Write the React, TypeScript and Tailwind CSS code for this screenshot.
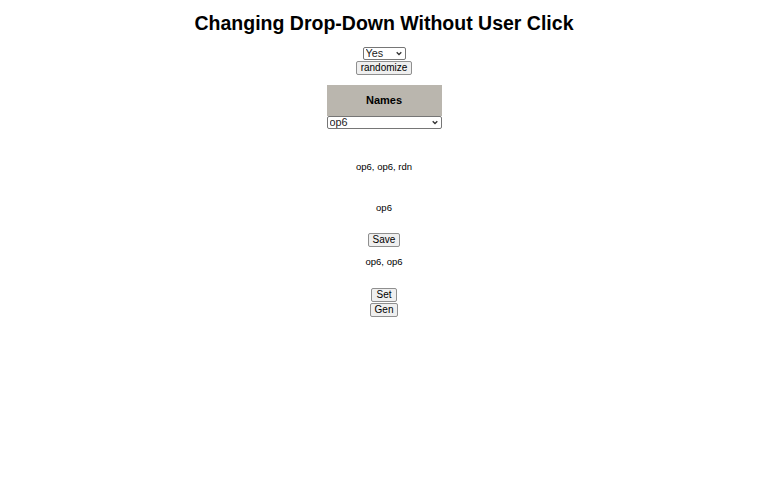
import React, { useState } from "react";

const btn =
  "border border-[#8f8f8f] bg-[#efefef] rounded-[2px] px-[4px] h-[14px] leading-[12px] text-[10px] text-black";

function Dropdown({
  value,
  options,
  width,
  onChange,
}: {
  value: string;
  options: string[];
  width: string;
  onChange: (v: string) => void;
}) {
  return (
    <div className={`flex items-center ${width}`}>
      <select
        value={value}
        onChange={(e) => onChange(e.target.value)}
        className="appearance-none w-full h-[13px] text-[10.8px] leading-[11px] border border-[#767676] bg-white rounded-[2px] pl-[2px] pr-[10px] text-[#222]"
      >
        {options.map((o) => (
          <option key={o}>{o}</option>
        ))}
      </select>
      <svg
        className="pointer-events-none shrink-0 -ml-[10px] mr-[4px]"
        width="6"
        height="5"
        viewBox="0 0 6 5"
        fill="none"
      >
        <path d="M0.7 1.2 L3 3.5 L5.3 1.2" stroke="#333" strokeWidth="1.3" />
      </svg>
    </div>
  );
}

export default function App() {
  const [flag, setFlag] = useState("Yes");
  const [name, setName] = useState("op6");

  return (
    <div className="min-h-[480px] bg-white text-black font-['Liberation_Sans',Arial,sans-serif] flex flex-col items-center">
      <h1 className="text-[19.5px] leading-[24px] font-bold pt-[11px]">
        Changing Drop-Down Without User Click
      </h1>

      <div className="mt-[12px]">
        <Dropdown value={flag} options={["Yes", "No"]} width="w-[43px]" onChange={setFlag} />
      </div>
      <button className={`${btn} mt-[1px]`}>randomize</button>

      {/* names table */}
      <div className="mt-[10px] w-[115px] flex flex-col">
        <div className="h-[31px] bg-[#bab6ae] flex items-center justify-center text-[11px] font-bold">
          Names
        </div>
        <Dropdown value={name} options={["op6", "rdn"]} width="w-[115px]" onChange={setName} />
      </div>

      <p className="mt-[32px] text-[9.5px] leading-[12px]">op6, op6, rdn</p>
      <p className="mt-[29px] text-[9.5px] leading-[12px]">op6</p>

      <button className={`${btn} mt-[19px]`}>Save</button>
      <p className="mt-[9px] text-[9.5px] leading-[12px]">op6, op6</p>

      <button className={`${btn} mt-[20px]`}>Set</button>
      <button className={`${btn} mt-[1px]`}>Gen</button>
    </div>
  );
}
